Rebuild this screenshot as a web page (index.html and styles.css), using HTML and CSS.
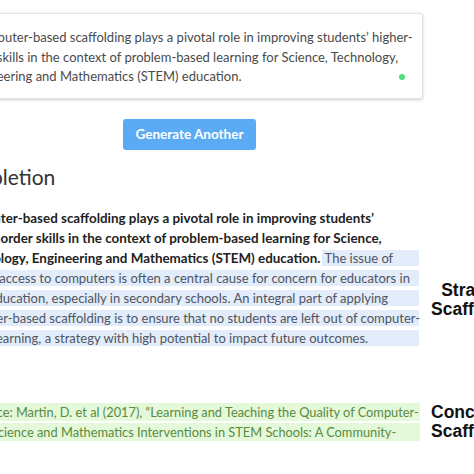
FILE: index.html
```
<!DOCTYPE html>
<html>
<head>
<meta charset="utf-8">
<link rel="stylesheet" href="styles.css">
</head>
<body>
<div class="page">
  <div class="main">
    <div class="card">
      <div class="card-line">Computer-based scaffolding plays a pivotal role in improving students’ higher-</div>
      <div class="card-line c2">order skills in the context of problem-based learning for Science, Technology,</div>
      <div class="card-row">
        <div class="card-line c3">Engineering and Mathematics (STEM) education.</div>
        <span class="dot"></span>
      </div>
    </div>
    <div class="btn-row"><button class="btn">Generate Another</button></div>
    <h2 class="heading">Completion</h2>
  </div>

  <div class="section para-section">
    <div class="para">
      <div class="line bold">Computer-based scaffolding plays a pivotal role in improving students’</div>
      <div class="line bold">higher-order skills in the context of problem-based learning for Science,</div>
      <div class="line mixed"><span class="bold">Technology, Engineering and Mathematics (STEM) education.</span><span class="hl hl-fill">The issue of</span></div>
      <div class="line hl l4">equal access to computers is often a central cause for concern for educators in</div>
      <div class="line hl l5">STEM education, especially in secondary schools. An integral part of applying</div>
      <div class="line hl l6">computer-based scaffolding is to ensure that no students are left out of computer-</div>
      <div class="line hl l7">based learning, a strategy with high potential to impact future outcomes.</div>
    </div>
    <div class="label label-strat">Strategic<br>Scaffolding</div>
  </div>

  <div class="section cite-section">
    <div class="para">
      <div class="line cite k1">Source: Martin, D. et al (2017), “Learning and Teaching the Quality of Computer-</div>
      <div class="line cite k2">Science and Mathematics Interventions in STEM Schools: A Community-</div>
    </div>
    <div class="label">Conceptual<br>Scaffolding</div>
  </div>
</div>
</body>
</html>
```
FILE: styles.css
```
html, body {
  margin: 0;
  padding: 0;
  background: #ffffff;
  overflow: hidden;
  width: 474px;
  height: 474px;
}
body {
  font-family: Lato, "Noto Sans", sans-serif;
  color: #333;
}
.page {
  width: 474px;
  height: 474px;
  overflow: hidden;
}
.main {
  margin-left: -44px;
  width: 467px;
  padding-top: 13px;
}
.card {
  border: 1px solid #e2e2e2;
  border-radius: 3px;
  box-shadow: 0 1px 3px rgba(0, 0, 0, 0.18);
  padding: 14px 17px 11px 14px;
  background: #fff;
}
.card-line {
  font-size: 13px;
  line-height: 19.5px;
  color: #4a4a4a;
  white-space: nowrap;
}
.c2 {
  text-indent: -8px;
}
.c3 {
  text-indent: -6px;
}
.card-row {
  display: flex;
  align-items: center;
  justify-content: space-between;
}
.dot {
  width: 6px;
  height: 6px;
  border-radius: 50%;
  background: #4ee07a;
}
.btn-row {
  display: flex;
  justify-content: center;
  margin-top: 20px;
}
.btn {
  width: 133px;
  height: 31px;
  border: none;
  border-radius: 3px;
  background: #5aabf3;
  color: #fff;
  font-family: Lato, sans-serif;
  font-weight: 700;
  font-size: 13.5px;
  padding: 0;
}
.heading {
  margin: 14px 0 0 -8px;
  font-weight: 400;
  font-size: 21px;
  line-height: 26px;
  color: #333;
}
.section {
  display: flex;
  margin-left: -42px;
}
.para-section {
  margin-top: 20px;
}
.para {
  width: 461px;
  flex: none;
}
.line {
  font-size: 13px;
  height: 16px;
  line-height: 16px;
  margin-bottom: 4px;
  white-space: nowrap;
}
.bold {
  font-weight: 700;
  font-size: 13.4px;
  color: #222;
}
.mixed {
  display: flex;
}
.hl {
  background: #e2ecfa;
  color: #4f5561;
  font-weight: 400;
  font-size: 13px;
}
.hl-fill {
  flex: 1;
  padding-left: 3px;
  margin-left: 1px;
}
.l4 {
  text-indent: 7px;
}
.l5 {
  text-indent: -7px;
}
.l6 {
  text-indent: -5px;
}
.l7 {
  text-indent: -2px;
}
.cite-section {
  margin-top: 53px;
}
.cite {
  background: #e4f8da;
  color: #5a8b3e;
  font-size: 12.8px;
  height: 18px;
  line-height: 18px;
  margin-bottom: 2px;
  width: 462px;
}
.k1 {
  text-indent: 13px;
}
.k2 {
  text-indent: 33px;
}
.label {
  margin-left: 12px;
  font-family: "Liberation Sans", Arial, sans-serif;
  font-weight: 700;
  font-size: 17.5px;
  line-height: 19px;
  color: #111;
  white-space: nowrap;
  text-align: center;
}
.label-strat {
  padding-top: 71px;
}
```
